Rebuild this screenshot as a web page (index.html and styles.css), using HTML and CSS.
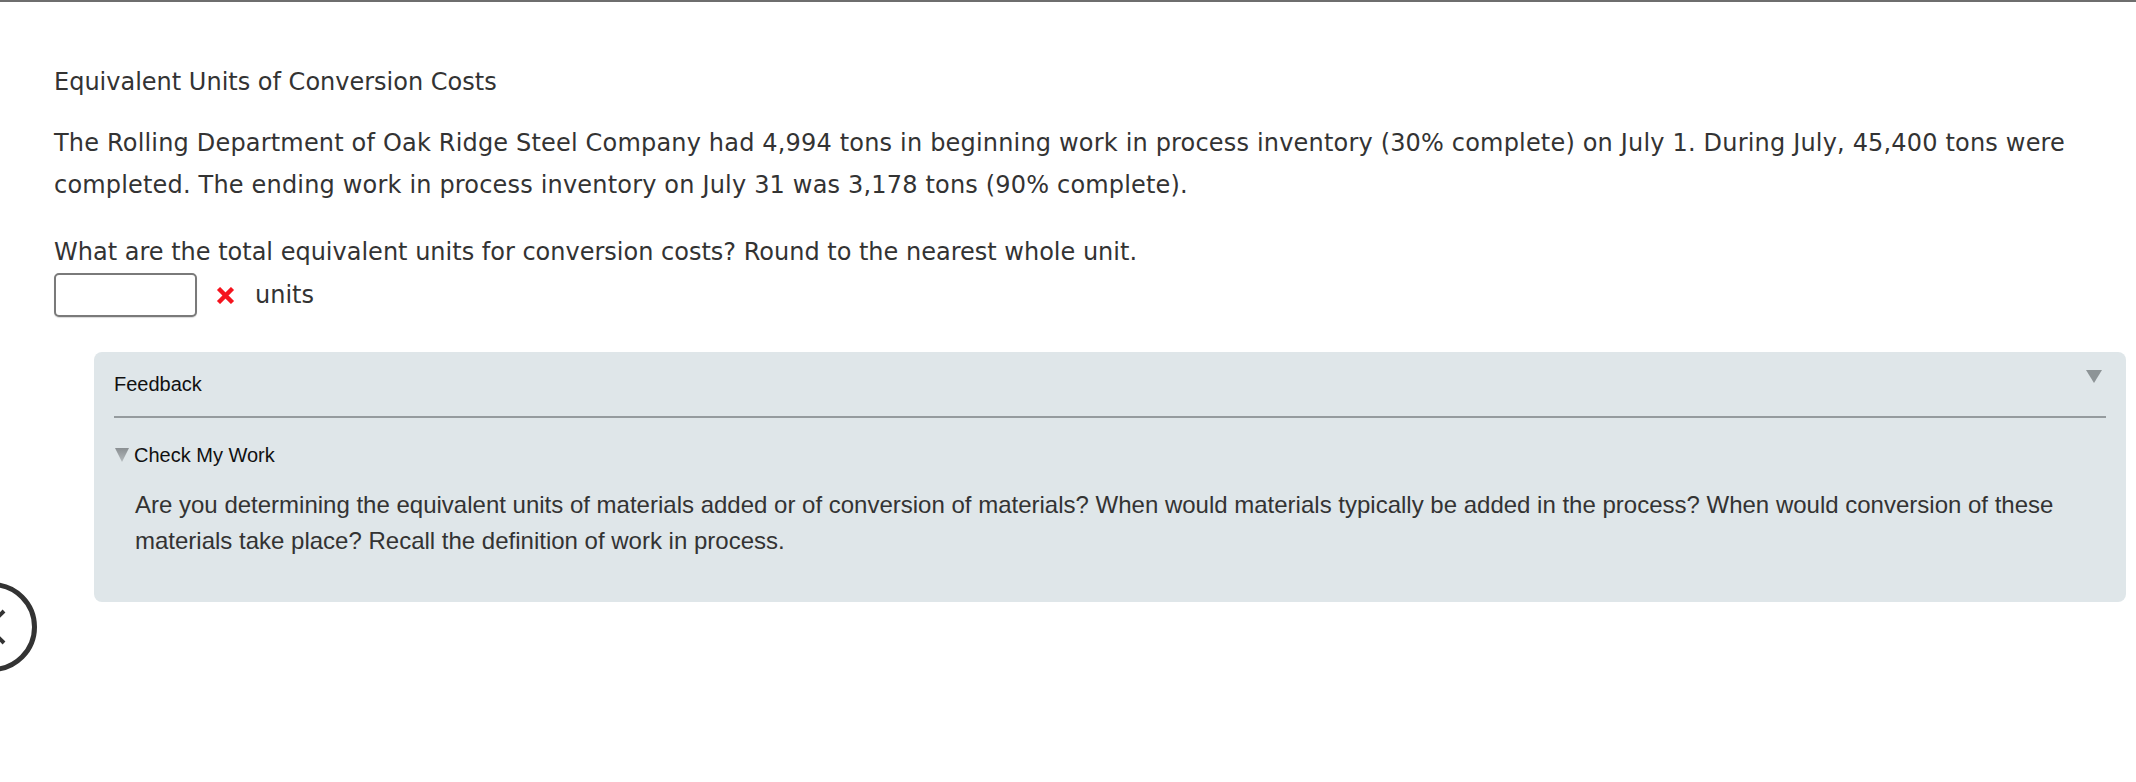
FILE: index.html
```html
<!DOCTYPE html>
<html lang="en">
<head>
<meta charset="utf-8">
<title>Equivalent Units of Conversion Costs</title>
<link rel="stylesheet" href="styles.css">
</head>
<body>
<div class="topbar"></div>
<main class="content">
  <h1 class="title">Equivalent Units of Conversion Costs</h1>
  <p class="para">The Rolling Department of Oak Ridge Steel Company had 4,994 tons in beginning work in process inventory (30% complete) on July 1. During July, 45,400 tons were completed. The ending work in process inventory on July 31 was 3,178 tons (90% complete).</p>
  <p class="question">What are the total equivalent units for conversion costs? Round to the nearest whole unit.</p>
  <div class="answer">
    <input class="answer-input" type="text" aria-label="answer">
    <svg class="wrong" width="19" height="17" viewBox="0 0 19 17"><path d="M2.5 1.5 L16.5 15.5 M16.5 1.5 L2.5 15.5" stroke="#f5141e" stroke-width="4.4" stroke-linecap="butt"/></svg>
    <span class="unit">units</span>
  </div>
  <section class="feedback">
    <div class="fb-head">
      <span class="fb-title">Feedback</span>
      <svg class="fb-toggle" width="16" height="13" viewBox="0 0 16 13"><polygon points="0,0 16,0 8,13" fill="#8d9497"/></svg>
    </div>
    <div class="fb-rule"></div>
    <div class="cmw">
      <svg class="cmw-tri" width="14" height="14" viewBox="0 0 14 14"><defs><linearGradient id="g" x1="0" y1="0" x2="0" y2="1"><stop offset="0" stop-color="#8a8f92"/><stop offset="1" stop-color="#b4babd"/></linearGradient></defs><polygon points="0,0 14,0 7,14" fill="url(#g)"/></svg>
      <span class="cmw-label">Check My Work</span>
    </div>
    <p class="fb-body">Are you determining the equivalent units of materials added or of conversion of materials? When would materials typically be added in the process? When would conversion of these materials take place? Recall the definition of work in process.</p>
  </section>
</main>
<svg class="side-button" width="60" height="120" viewBox="0 0 60 120" aria-hidden="true">
  <circle cx="-8" cy="57" r="42.5" fill="none" stroke="#333" stroke-width="5"/>
  <polyline points="4,41 -12,57 4,73" fill="none" stroke="#333" stroke-width="4"/>
</svg>
</body>
</html>
```
FILE: styles.css
```css
html, body {
  margin: 0;
  padding: 0;
  background: #ffffff;
}
body {
  width: 2136px;
  height: 782px;
  overflow: hidden;
  position: relative;
  font-family: "DejaVu Sans", Verdana, sans-serif;
  color: #333333;
}
.topbar {
  height: 2px;
  background: #6e6e6e;
}
.content {
  padding: 0 10px 0 54px;
}
.title {
  margin: 65px 0 0;
  font-size: 24px;
  font-weight: normal;
  line-height: 30px;
  color: #333;
}
.para {
  margin: 25px 0 0;
  font-size: 24px;
  line-height: 42px;
  letter-spacing: 0.18px;
}
.question {
  margin: 25px 0 0;
  font-size: 24px;
  line-height: 42px;
}
.answer {
  display: flex;
  align-items: center;
  height: 44px;
}
.answer-input {
  box-sizing: border-box;
  width: 143px;
  height: 44px;
  margin: 0;
  border: 2px solid #7a7a7a;
  border-radius: 5px;
  background: #fff;
  box-shadow: 0 1px 1px rgba(0,0,0,0.15);
}
.wrong {
  margin-left: 19px;
}
.unit {
  margin-left: 20px;
  font-size: 24px;
  color: #333;
}
.feedback {
  margin: 35px 0 0 40px;
  background: #dfe6e9;
  border-radius: 8px;
  padding: 20px 20px 43px;
  font-family: "Liberation Sans", Arial, sans-serif;
}
.fb-head {
  display: flex;
  justify-content: space-between;
  align-items: flex-start;
  height: 24px;
}
.fb-title {
  font-size: 20px;
  line-height: 24px;
  color: #111;
}
.fb-toggle {
  margin: -2px 4px 0 0;
}
.fb-rule {
  margin-top: 20px;
  height: 2px;
  background: #959b9e;
}
.cmw {
  margin-top: 25px;
  display: flex;
  align-items: center;
  height: 24px;
}
.cmw-tri {
  margin-left: 1px;
  margin-right: 5px;
}
.cmw-label {
  font-size: 20px;
  line-height: 24px;
  color: #111;
}
.fb-body {
  margin: 20px 0 0 21px;
  font-size: 24px;
  line-height: 36px;
  color: #333;
}
.side-button {
  position: absolute;
  left: 0;
  top: 570px;
}
```
